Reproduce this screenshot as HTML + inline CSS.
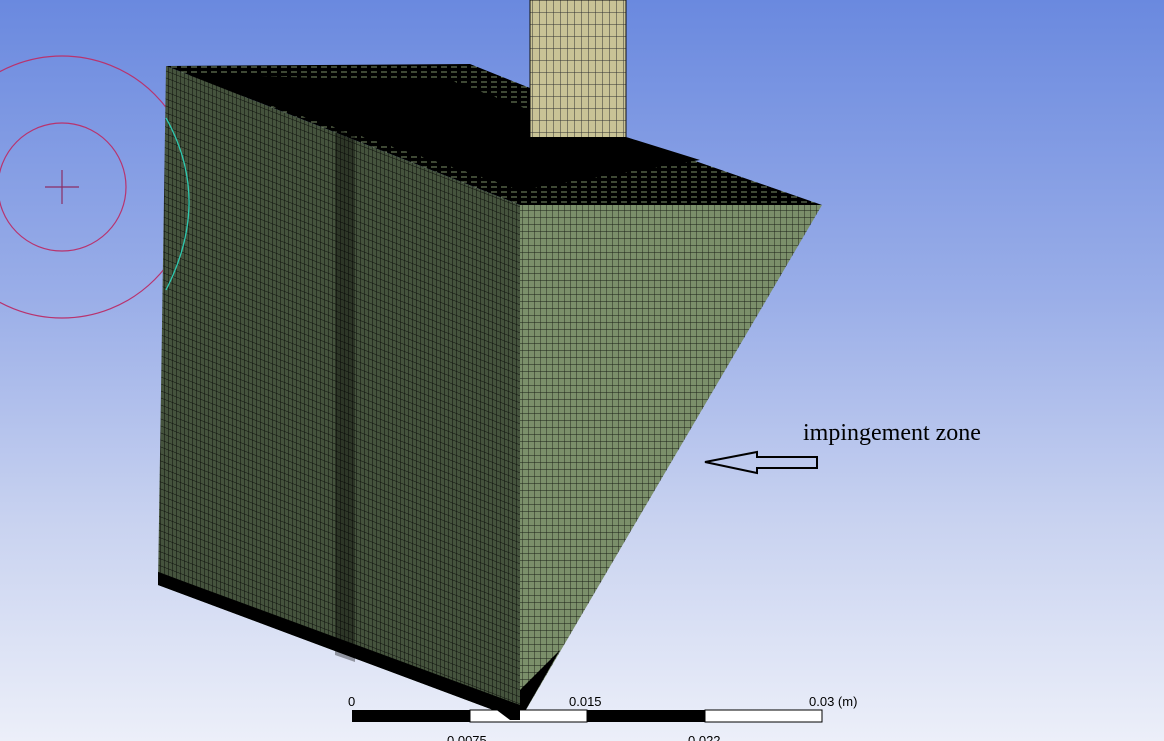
<!DOCTYPE html>
<html><head><style>
html,body{margin:0;padding:0;}
body{width:1164px;height:741px;overflow:hidden;background:linear-gradient(#6a89df 0%,#9aaee8 40%,#c8d2f0 70%,#eceff9 100%);position:relative;font-family:"Liberation Sans",sans-serif;}
svg{position:absolute;left:0;top:0;}
</style></head><body>
<svg width="1164" height="741" viewBox="0 0 1164 741">
<defs>
<pattern id="lg" width="4" height="7" patternUnits="userSpaceOnUse" patternTransform="skewY(21)">
<rect width="4" height="7" fill="#45533d"/>
<path d="M0 0V7M0 0H4" stroke="#0d0f0b" stroke-width="1"/>
</pattern>
<pattern id="rg" width="6" height="7" patternUnits="userSpaceOnUse">
<rect width="6" height="7" fill="#7b8f6a"/>
<path d="M0 0V7M0 0H6" stroke="#1a1f16" stroke-width="0.9"/>
</pattern>
<pattern id="cg" width="7" height="12" patternUnits="userSpaceOnUse">
<rect width="7" height="12" fill="#c9c396"/>
<path d="M0 0V12M0 0H7" stroke="#333" stroke-width="1"/>
</pattern>
<pattern id="tg" width="10" height="5" patternUnits="userSpaceOnUse">
<rect width="10" height="5" fill="#000"/>
<path d="M1 2H7" stroke="#7d8f68" stroke-width="1"/>
</pattern>
</defs>
<circle cx="62" cy="187" r="131" fill="none" stroke="#b8336e" stroke-width="1.2"/>
<circle cx="62" cy="187" r="64" fill="none" stroke="#b8336e" stroke-width="1.2"/>
<path d="M62 170V204M45 187H79" stroke="#8a2e66" stroke-width="1.2"/>
<rect x="530" y="0" width="96" height="138" fill="url(#cg)" stroke="#111"/>
<polygon points="166,66 470,64 530,88 530,137 626,137 822,205 520,205" fill="url(#tg)"/>
<polygon points="180,75 450,80 530,110 530,137 626,137 700,160 520,190" fill="#000"/>
<polygon points="166,66 520,205 520,720 158,585" fill="url(#lg)"/>
<polygon points="158,572 520,705 520,720 158,585" fill="#000"/>
<polygon points="335,128 355,136 355,662 335,655" fill="#000" opacity="0.35"/>
<polygon points="520,205 822,205 520,720" fill="url(#rg)"/>
<polygon points="520,690 560,650 520,720" fill="#000"/>
<path d="M166 118 Q212 200 166 290" fill="none" stroke="#2ec9b0" stroke-width="1.3"/>
<path d="M705 462 L757 452 L757 457 L817 457 L817 468 L757 468 L757 473 Z" fill="none" stroke="#000" stroke-width="2"/>
<text x="803" y="440" font-family="Liberation Serif,serif" font-size="24" fill="#000">impingement zone</text>
<rect x="352" y="710" width="118" height="12" fill="#000"/>
<rect x="470" y="710" width="117" height="12" fill="#fff" stroke="#000"/>
<rect x="587" y="710" width="118" height="12" fill="#000"/>
<rect x="705" y="710" width="117" height="12" fill="#fff" stroke="#000"/>
<polygon points="470,690 520,705 520,720 510,720" fill="#000"/>
<text x="348" y="706" font-size="13" fill="#000">0</text>
<text x="569" y="706" font-size="13" fill="#000">0.015</text>
<text x="809" y="706" font-size="13" fill="#000">0.03 (m)</text>
<text x="447" y="745" font-size="13" fill="#000">0.0075</text>
<text x="688" y="745" font-size="13" fill="#000">0.022</text>
</svg>
</body></html>
